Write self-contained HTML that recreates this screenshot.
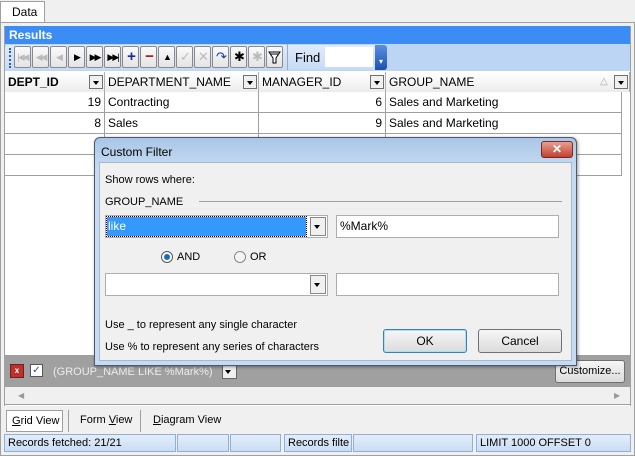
<!DOCTYPE html>
<html><head><style>
*{box-sizing:border-box;margin:0;padding:0}
body{width:635px;height:456px;background:#f0f0f0;font-family:"Liberation Sans",sans-serif;font-size:11px;color:#000;position:relative;overflow:hidden}
.a{position:absolute}
.tb{position:absolute;top:46px;width:17px;height:22px;border:1px solid #8a8a8a;border-radius:2px;background:linear-gradient(#fafafa,#e4e4e4);font-size:9px;text-align:center;line-height:20px;letter-spacing:-2px}
.hd{position:absolute;top:72px;height:20px;border-right:1px solid #b0b0b0;background:linear-gradient(#fff,#ececec);line-height:20px;padding-left:3px;font-size:12px}
.dd{position:absolute;top:3px;width:14px;height:14px;border:1px solid #707070;background:#f0f0f0}
.dd:after{content:"";position:absolute;left:3px;top:5px;border:3px solid transparent;border-top:4px solid #000;border-bottom:0}
.cell{position:absolute;height:21px;line-height:20px;font-size:12px;border-right:1px solid #a0a0a0;border-bottom:1px solid #a0a0a0}
.btn{position:absolute;border:1px solid #707070;border-radius:3px;background:linear-gradient(#f6f6f6,#dcdcdc);text-align:center;font-size:12px}
.inp{position:absolute;background:#fff;border:1px solid #abadb3}
.sb{position:absolute;top:434px;height:18px;border:1px solid #8fb0d8;background:linear-gradient(#e4eefa,#cbdcf3);line-height:16px;padding-left:3px;font-size:11px}
</style></head><body>
<div class="a" style="left:0;top:1px;width:45px;height:22px;background:#fff;border:1px solid #a0a0a0;border-bottom:none;line-height:20px;padding-left:11px;font-size:12px">Data</div>
<div class="a" style="left:0;top:22px;width:635px;height:434px;border:1px solid #a0a0a0"></div>
<div class="a" style="left:4px;top:26px;width:627px;height:408px;border:1px solid #a0a0a0;background:#fff"></div>
<div class="a" style="left:5px;top:26px;width:625px;height:18px;background:#3b8df5;color:#fff;font-weight:bold;font-size:12px;line-height:18px;padding-left:4px">Results</div>
<div class="a" style="left:5px;top:44px;width:625px;height:27px;background:#bdd5f5"></div>
<div class="a" style="left:5px;top:45px;width:382px;height:25px;background:linear-gradient(#e0ebfa,#c6daf5);border-radius:3px"></div>
<div class="a" style="left:9px;top:48px;width:2px;height:20px;border-left:2px dotted #3b5c9b"></div>
<div class="tb" style="left:14px;color:#bbb">|◀◀</div>
<div class="tb" style="left:32px;color:#bbb">◀◀</div>
<div class="tb" style="left:50px;color:#bbb">◀</div>
<div class="tb" style="left:68px">▶</div>
<div class="tb" style="left:86px">▶▶</div>
<div class="tb" style="left:104px">▶▶|</div>
<div class="tb" style="left:122px;color:#1a2a9a;font-weight:bold;font-size:15px">+</div>
<div class="tb" style="left:140px;color:#a01818;font-weight:bold;font-size:15px">−</div>
<div class="tb" style="left:158px">▲</div>
<div class="tb" style="left:176px;color:#bbb;font-size:13px">✓</div>
<div class="tb" style="left:194px;color:#bbb;font-size:13px">✕</div>
<div class="tb" style="left:212px;color:#1a3a9a;font-size:13px">↷</div>
<div class="tb" style="left:230px;font-size:13px">✱</div>
<div class="tb" style="left:248px;color:#bbb;font-size:13px">✱</div>
<div class="tb" style="left:266px"><svg width="15" height="20" viewBox="0 0 15 20"><path d="M2 5h11l-4 6v5h-3v-5z" fill="#fff" stroke="#000"/><path d="M3 7h9" stroke="#000"/></svg></div>
<div class="a" style="left:287px;top:44px;width:1px;height:26px;background:#9ab"></div>
<div class="a" style="left:295px;top:50px;font-size:13px">Find</div>
<div class="a" style="left:325px;top:47px;width:48px;height:20px;background:#fff"></div>
<div class="a" style="left:375px;top:45px;width:12px;height:25px;background:linear-gradient(#5a8fe0,#1e4fb0);border-radius:0 3px 3px 0;color:#fff;font-size:8px;text-align:center;line-height:34px">▾</div>
<div class="hd" style="left:5px;width:100px;font-weight:bold">DEPT_ID<div class="dd" style="left:84px"></div></div>
<div class="hd" style="left:105px;width:154px">DEPARTMENT_NAME<div class="dd" style="left:138px"></div></div>
<div class="hd" style="left:259px;width:127px">MANAGER_ID<div class="dd" style="left:111px"></div></div>
<div class="hd" style="left:386px;width:244px">GROUP_NAME<span class="a" style="left:214px;top:0;color:#aaa;font-size:10px">△</span><div class="dd" style="left:228px"></div></div>
<div class="cell" style="left:5px;top:92px;width:100px;text-align:right;padding-right:3px">19</div>
<div class="cell" style="left:105px;top:92px;width:154px;padding-left:3px">Contracting</div>
<div class="cell" style="left:259px;top:92px;width:127px;text-align:right;padding-right:3px">6</div>
<div class="cell" style="left:386px;top:92px;width:236px;padding-left:3px">Sales and Marketing</div>
<div class="cell" style="left:5px;top:113px;width:100px;text-align:right;padding-right:3px">8</div>
<div class="cell" style="left:105px;top:113px;width:154px;padding-left:3px">Sales</div>
<div class="cell" style="left:259px;top:113px;width:127px;text-align:right;padding-right:3px">9</div>
<div class="cell" style="left:386px;top:113px;width:236px;padding-left:3px">Sales and Marketing</div>
<div class="cell" style="left:5px;top:134px;width:100px"></div>
<div class="cell" style="left:105px;top:134px;width:154px"></div>
<div class="cell" style="left:259px;top:134px;width:127px"></div>
<div class="cell" style="left:386px;top:134px;width:236px"></div>
<div class="cell" style="left:5px;top:155px;width:100px"></div>
<div class="cell" style="left:105px;top:155px;width:154px"></div>
<div class="cell" style="left:259px;top:155px;width:127px"></div>
<div class="cell" style="left:386px;top:155px;width:236px"></div>
<div class="a" style="left:5px;top:355px;width:625px;height:32px;background:#a0a0a0"></div>
<div class="a" style="left:10px;top:364px;width:14px;height:14px;background:#c0302a;border:1px solid #702020;color:#fff;font-size:8px;text-align:center;line-height:12px;font-weight:bold">x</div>
<div class="a" style="left:30px;top:364px;width:13px;height:13px;background:#fff;border:1px solid #555;color:#2a4aa0;font-size:10px;line-height:11px;text-align:center">✓</div>
<div class="a" style="left:53px;top:366px;color:#ececec;font-size:11px">(GROUP_NAME LIKE %Mark%)</div>
<div class="a" style="left:222px;top:365px;width:15px;height:14px;background:#f0f0f0;border:1px solid #666"><div class="dd" style="top:-1px;left:-1px;border:none;background:none"></div></div>
<div class="btn" style="left:555px;top:360px;width:70px;height:23px;line-height:21px;font-size:11px">Customize...</div>
<div class="a" style="left:5px;top:387px;width:625px;height:18px;background:#f0f0f0;border-bottom:1px solid #a0a0a0"></div>
<div class="a" style="left:18px;top:391px;color:#999;font-size:8px">◀</div>
<div class="a" style="left:614px;top:391px;color:#999;font-size:8px">▶</div>
<div class="a" style="left:4px;top:406px;width:627px;height:28px;background:#f0f0f0"></div>
<div class="a" style="left:6px;top:410px;width:57px;height:22px;background:#fff;border:1px solid #a0a0a0;line-height:20px;padding-left:5px;font-size:11px"><u>G</u>rid View</div>
<div class="a" style="left:68px;top:410px;width:1px;height:22px;background:#a0a0a0"></div>
<div class="a" style="left:80px;top:414px;font-size:11px">Form <u>V</u>iew</div>
<div class="a" style="left:140px;top:410px;width:1px;height:22px;background:#a0a0a0"></div>
<div class="a" style="left:153px;top:414px;font-size:11px"><u>D</u>iagram View</div>
<div class="sb" style="left:4px;width:172px">Records fetched: 21/21</div>
<div class="sb" style="left:177px;width:52px"></div>
<div class="sb" style="left:230px;width:51px"></div>
<div class="sb" style="left:284px;width:68px;overflow:hidden;white-space:nowrap">Records filte</div>
<div class="sb" style="left:353px;width:120px"></div>
<div class="sb" style="left:476px;width:155px">LIMIT 1000 OFFSET 0</div>
<div class="a" style="left:94px;top:137px;width:483px;height:229px;background:linear-gradient(#aac6e6,#c4dbf2 30px);border:1px solid #4a5a70;border-radius:6px 6px 0 0;box-shadow:1px 1px 3px rgba(0,0,0,.4)"></div>
<div class="a" style="left:101px;top:145px;font-size:12px">Custom Filter</div>
<div class="a" style="left:541px;top:141px;width:32px;height:17px;background:linear-gradient(#e8a090,#c04030);border:1px solid #802820;border-radius:3px;color:#fff;font-weight:bold;text-align:center;line-height:15px;font-size:12px">✕</div>
<div class="a" style="left:99px;top:162px;width:473px;height:199px;background:#f0f0f0;border:1px solid #a8b8cc"></div>
<div class="a" style="left:105px;top:174px">Show rows where:</div>
<div class="a" style="left:105px;top:196px">GROUP_NAME</div>
<div class="a" style="left:199px;top:201px;width:363px;height:1px;background:#a0a0a0"></div>
<div class="inp" style="left:105px;top:215px;width:223px;height:23px"></div>
<div class="a" style="left:107px;top:217px;width:199px;height:19px;background:#3399ff;color:#fff;line-height:19px;padding-left:1px;font-size:12px;outline:1px dotted #000">like</div>
<div class="a" style="left:310px;top:217px;width:16px;height:19px;background:#f0f0f0;border:1px solid #888"><div class="dd" style="left:0;top:2px;border:none;background:none"></div></div>
<div class="inp" style="left:336px;top:215px;width:223px;height:23px;line-height:21px;padding-left:3px;font-size:12px">%Mark%</div>
<div class="a" style="left:161px;top:251px;width:12px;height:12px;border-radius:50%;border:1px solid #555;background:radial-gradient(#1a6ab8 2.5px,#fff 3.5px)"></div>
<div class="a" style="left:177px;top:251px">AND</div>
<div class="a" style="left:234px;top:251px;width:12px;height:12px;border-radius:50%;border:1px solid #888;background:#f4f4f4"></div>
<div class="a" style="left:250px;top:251px">OR</div>
<div class="inp" style="left:105px;top:273px;width:223px;height:23px"></div>
<div class="a" style="left:310px;top:275px;width:16px;height:19px;background:#f0f0f0;border:1px solid #888"><div class="dd" style="left:0;top:2px;border:none;background:none"></div></div>
<div class="inp" style="left:336px;top:273px;width:223px;height:23px"></div>
<div class="a" style="left:105px;top:319px">Use _ to represent any single character</div>
<div class="a" style="left:105px;top:341px">Use % to represent any series of characters</div>
<div class="btn" style="left:383px;top:329px;width:84px;height:24px;line-height:22px;border-color:#3c7fb1;box-shadow:inset 0 0 0 1px #a8e0f8">OK</div>
<div class="btn" style="left:478px;top:329px;width:84px;height:24px;line-height:22px">Cancel</div>
</body></html>
